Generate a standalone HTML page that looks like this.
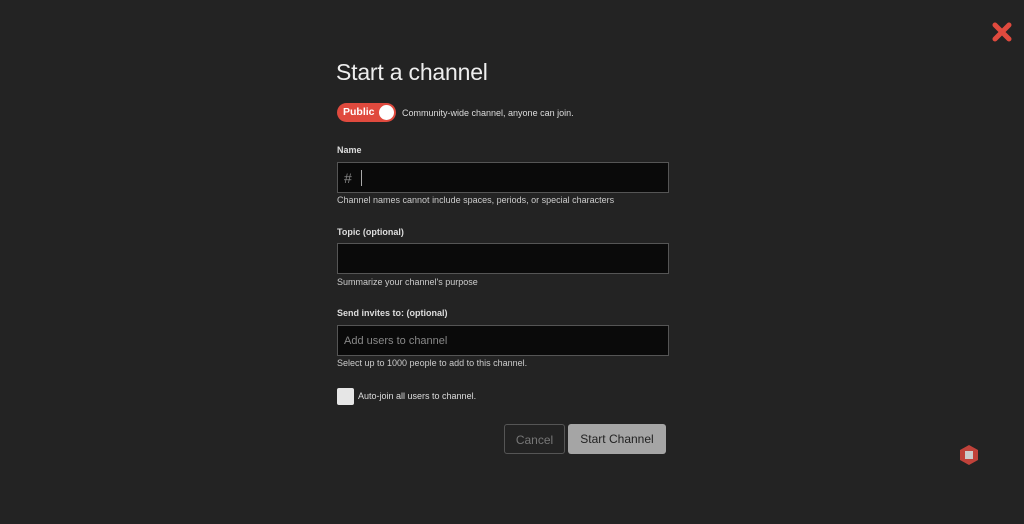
<!DOCTYPE html>
<html><head><style>
body{margin:0;width:1024px;height:524px;background:#232323;font-family:"Liberation Sans",sans-serif;color:#ddd;position:relative;overflow:hidden}
.a{position:absolute}
h1{position:absolute;left:336px;top:59px;margin:0;font-weight:normal;font-size:23px;letter-spacing:-0.2px;color:#eee}
.lbl{font-size:9px;font-weight:bold;color:#ddd}
.hint{font-size:9px;color:#ccc}
.in{position:absolute;left:337px;width:332px;height:31px;background:#0a0a0a;border:1px solid #555;box-sizing:border-box}
.btn{position:absolute;top:424px;height:30px;border-radius:3px;font-size:12px;text-align:center;line-height:30px;box-sizing:border-box}
</style></head><body>
<h1>Start a channel</h1>
<div class="a" style="left:337px;top:103px;width:59px;height:19px;border-radius:10px;background:#e04a3e"></div>
<div class="a" style="left:343px;top:106px;font-size:10.5px;font-weight:bold;color:#fff">Public</div>
<div class="a" style="left:379px;top:105px;width:15px;height:15px;border-radius:50%;background:#fff"></div>
<div class="a hint" style="left:402px;top:108px;color:#ddd">Community-wide channel, anyone can join.</div>
<div class="a lbl" style="left:337px;top:145px">Name</div>
<div class="in" style="top:162px"><span class="a" style="left:6px;top:7px;font-size:14px;color:#888">#</span><span class="a" style="left:23px;top:7px;width:1px;height:16px;background:#aaa"></span></div>
<div class="a hint" style="left:337px;top:195px">Channel names cannot include spaces, periods, or special characters</div>
<div class="a lbl" style="left:337px;top:227px">Topic (optional)</div>
<div class="in" style="top:243px"></div>
<div class="a hint" style="left:337px;top:277px">Summarize your channel's purpose</div>
<div class="a lbl" style="left:337px;top:308px">Send invites to: (optional)</div>
<div class="in" style="top:325px"><span class="a" style="left:6px;top:9px;font-size:11px;color:#888">Add users to channel</span></div>
<div class="a hint" style="left:337px;top:358px">Select up to 1000 people to add to this channel.</div>
<div class="a" style="left:337px;top:388px;width:17px;height:17px;background:#e6e6e6;border-radius:2px"></div>
<div class="a hint" style="left:358px;top:391px;color:#ddd">Auto-join all users to channel.</div>
<div class="btn" style="left:504px;width:61px;border:1px solid #555;color:#777">Cancel</div>
<div class="btn" style="left:568px;width:98px;background:#a5a5a5;color:#222">Start Channel</div>
<svg class="a" style="left:990px;top:20px" width="24" height="24" viewBox="0 0 24 24"><path d="M5 5L19 19M19 5L5 19" stroke="#e04a3e" stroke-width="5" stroke-linecap="round"/></svg>
<svg class="a" style="left:958px;top:444px" width="22" height="22" viewBox="0 0 22 22"><polygon points="11,1 20,6 20,16 11,21 2,16 2,6" fill="#c0423a"/><rect x="7" y="7" width="8" height="8" fill="#ccc"/></svg>
</body></html>
